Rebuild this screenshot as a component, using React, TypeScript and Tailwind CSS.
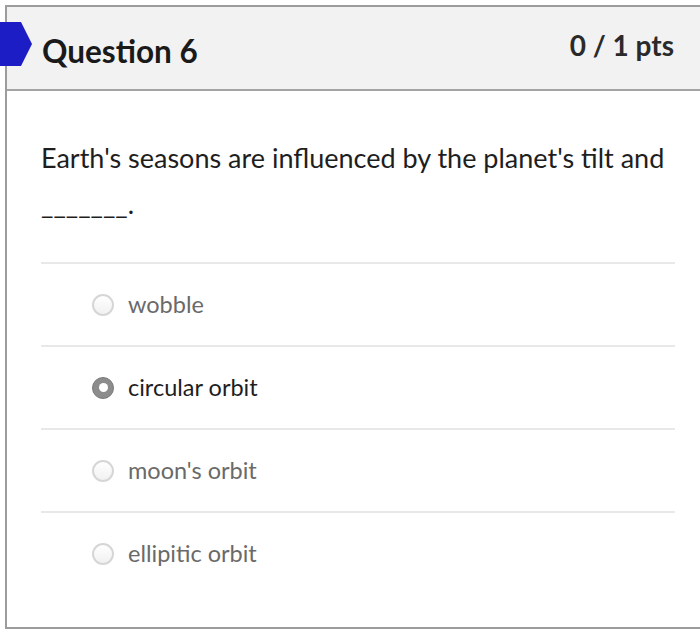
import React from 'react';

const answers = [
    { label: 'wobble', selected: false },
    { label: 'circular orbit', selected: true },
    { label: "moon's orbit", selected: false },
    { label: 'ellipitic orbit', selected: false },
];

const Radio: React.FC<{ selected: boolean }> = ({ selected }) =>
    selected ? (
        <span className="w-[22px] h-[22px] rounded-full bg-[#8c8c8c] border border-[#7a7a7a] flex items-center justify-center shrink-0">
            <span className="w-[9px] h-[9px] rounded-full bg-white" />
        </span>
    ) : (
        <span className="w-[22px] h-[22px] rounded-full border-2 border-[#d6d6d6] bg-gradient-to-b from-white to-[#f1f1f1] shrink-0" />
    );

export default function App() {
    return (
        <div className="relative w-[700px] h-[633px] overflow-hidden bg-white pt-[5px] pl-[5px]" style={{ fontFamily: 'Lato, "Open Sans", sans-serif' }}>
            <div className="w-[720px] border-l-2 border-t-2 border-b-2 border-[#9c9c9c]">
                <div className="h-[84px] bg-[#f2f2f2] border-b-2 border-[#a3a3a3] flex justify-between pl-[35px] pr-[51px]">
                    <h2 className="text-[31.5px] font-bold text-[#1a1a1a] mt-[24px] leading-[40px]">Question 6</h2>
                    <span className="text-[28px] font-bold text-[#2a2a2a] mt-[20px] leading-[36px]">0 / 1 pts</span>
                </div>
                <div className="pl-[34px] w-[668px]">
                    <p className="text-[27px] leading-[46px] text-[#1e1e1e] pt-[44px] mb-[35px] whitespace-nowrap">
                        Earth's seasons are influenced by the planet's tilt and
                        <br />
                        _______.
                    </p>
                    {answers.map((a) => (
                        <div key={a.label} className="h-[83px] border-t-2 border-[#e8e8e8] flex items-center pl-[51px] gap-[14px]">
                            <Radio selected={a.selected} />
                            <span className={`text-[23.5px] ${a.selected ? 'text-[#1e1e1e]' : 'text-[#6a6a6a]'}`}>{a.label}</span>
                        </div>
                    ))}
                    <div className="h-[33px]" />
                </div>
            </div>
            <svg className="absolute left-0 top-[22px]" width="33" height="45" viewBox="0 0 33 45">
                <polygon points="0,0 21,0 32,22 21,44 0,44" fill="#1d1dc6" />
            </svg>
        </div>
    );
}
